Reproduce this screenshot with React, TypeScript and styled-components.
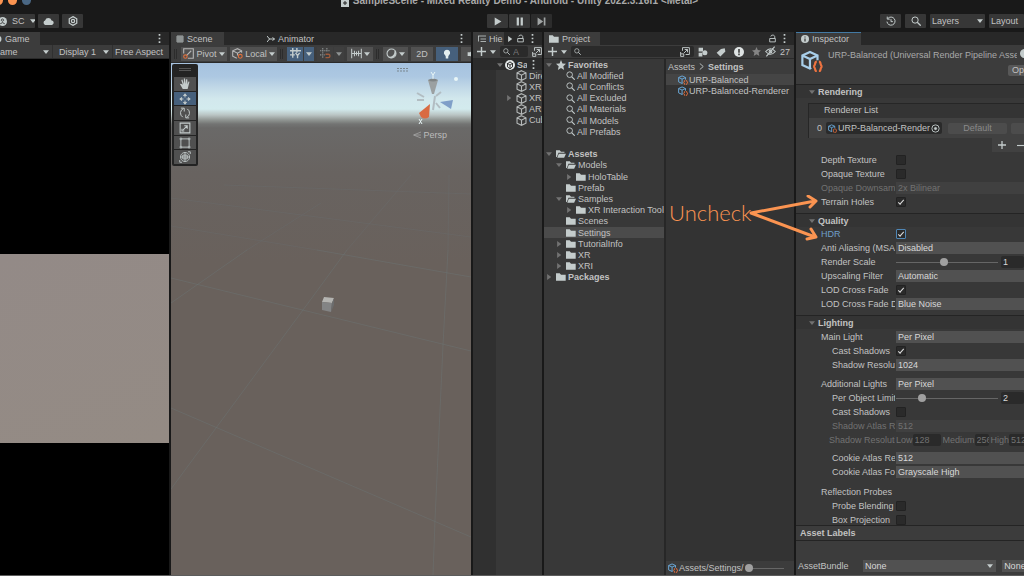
import React from "react";
import styled, { createGlobalStyle, css } from "styled-components";

const c = {
  chrome: "#191919",
  strip: "#282828",
  panel: "#383838",
  bar: "#3c3c3c",
  dark: "#333333",
  field: "#2a2a2a",
  button: "#515151",
  text: "#c2c2c2",
  bright: "#d8d8d8",
  dim: "#727272",
  icon: "#c4cccc",
  blue: "#46607c",
  orange: "#fb9451",
};

const GlobalStyle = createGlobalStyle`
  *, *::before, *::after { box-sizing: border-box; }
  body { margin: 0; background: ${c.chrome}; }
  body, button, input, select { font: 9px/12px "Liberation Sans", Arial, sans-serif; color: ${c.text}; }
  h1, h2, ul { margin: 0; padding: 0; font-size: 9px; list-style: none; }
  button, input, select { margin: 0; border: 0; padding: 0; background: none; border-radius: 0; }
  svg { display: block; flex: none; }
`;

/* ---------- icons ---------- */

const Svg = styled.svg.attrs({ viewBox: "0 0 16 16", "aria-hidden": true })<{ $s?: number; $c?: string }>`
  width: ${(p) => p.$s ?? 10}px;
  height: ${(p) => p.$s ?? 10}px;
  color: ${(p) => p.$c ?? c.icon};
  fill: none;
  stroke: currentColor;
  stroke-width: 1.6;
`;

type IconProps = { s?: number; color?: string };
const solid = { fill: "currentColor", stroke: "none" };

const Caret = ({ s = 6, color }: IconProps) => (
  <Svg $s={s} $c={color}><path d="M0 3h16L8 13z" {...solid} /></Svg>
);
const CaretRight = ({ s = 6, color }: IconProps) => (
  <Svg $s={s} $c={color}><path d="M3 0v16l11-8z" {...solid} /></Svg>
);
const Kebab = () => (
  <Svg $s={9}><path d="M6.500 0h3v3h-3zM6.500 6.500h3v3h-3zM6.500 13h3v3h-3z" {...solid} /></Svg>
);
const Lock = () => (
  <Svg $s={9}><path d="M3 8h10v6H3zM5 4.500C5 1 12 1 12 5v3" /></Svg>
);
const Plus = ({ s = 9 }: IconProps) => (
  <Svg $s={s}><path d="M8 0v16M0 8h16" strokeWidth="2.600" /></Svg>
);
const Search = ({ s = 9, color }: IconProps) => (
  <Svg $s={s} $c={color}><circle cx="6.500" cy="6.500" r="5" /><path d="M10 10l5.500 5.500" strokeWidth="2" /></Svg>
);
const CubeIcon = ({ s = 11, color = "#b5b9b9" }: IconProps) => (
  <Svg $s={s} $c={color}><path d="M8 1l6.500 3v8L8 15l-6.500-3V4zM1.500 4L8 7.500 14.500 4M8 7.500V15" /></Svg>
);
const AssetIcon = ({ s = 10 }: IconProps) => (
  <Svg $s={s} $c={s > 12 ? "#a9cfea" : "#6aa5d3"}>
    <path d="M7.500 13L6.500 13.500 1 11V4l5.500-2.500L12 4v3.500M1 4l5.500 2.500L12 4M6.500 6.500v7" />
    <path d="M11.500 8.500c-2 0-.500 3-2.500 3.500 2 .500.500 3.500 2.500 3.500M13 8.500c2 0 .500 3 2.500 3.500-2 .500-.500 3.500-2.500 3.500" stroke="#ee7340" />
  </Svg>
);
const Folder = () => (
  <Svg $s={10}><path d="M0 2h6l2 2.500h7.500V14H0z" {...solid} /></Svg>
);
const FolderOpen = () => (
  <Svg $s={10}><path d="M0 2h6l2 2.500h5.500V6H4L1.500 12.500 0 13zM4.500 7.500H16L13 14H2z" {...solid} /></Svg>
);
const Star = ({ s = 10, color }: IconProps) => (
  <Svg $s={s} $c={color}><path d="M8 0l2.300 5.400 5.700.600-4.300 3.900 1.300 5.900L8 12.800 3 15.800l1.300-5.900L0 6l5.700-.600z" {...solid} /></Svg>
);
const Popout = () => (
  <Svg $s={10}><path d="M4 1h11v11H9M4 1v5M6 10l6-6M7.500 4H12v4.500M1 8v7h5v-4H1" strokeWidth="1.500" /></Svg>
);
const GridIcon = ({ s = 9, color }: IconProps) => (
  <Svg $s={s} $c={color}><path d="M4 0v16M12 0v16M0 4h16M0 12h16M8 0v16M0 8h16" strokeWidth="1.500" /></Svg>
);

/* ---------- frame ---------- */

const Window = styled.div`
  display: flex;
  flex-direction: column;
  height: 100vh;
  overflow: hidden;
  border-bottom: 1px solid #5c5c5c;
`;
const TitleBar = styled.header`
  display: flex;
  align-items: flex-end;
  justify-content: center;
  gap: 4px;
  height: 7px;
  flex: none;
  padding-left: 15px;
  position: relative;
  overflow: hidden;
  h1 { font-size: 10px; line-height: 12px; font-weight: 700; white-space: nowrap; color: #a9a9a9; }
`;
const Lights = styled.div`
  position: absolute;
  left: -6px;
  bottom: 2px;
  display: flex;
  gap: 5px;
`;
const Light = styled.i<{ $c: string }>`
  width: 9px;
  height: 9px;
  border-radius: 50%;
  background: ${(p) => p.$c};
`;
const MainBar = styled.nav`
  display: grid;
  grid-template-columns: 487fr auto 472fr;
  padding: 7px 0 4px;
  flex: none;
`;
const BarGroup = styled.div<{ $end?: boolean; $gap?: number }>`
  display: flex;
  gap: ${(p) => p.$gap ?? 3}px;
  justify-content: ${(p) => (p.$end ? "flex-end" : "flex-start")};
  min-width: 0;
`;
const BarButton = styled.button<{ $w?: number; $cut?: boolean; $dim?: boolean }>`
  display: flex;
  align-items: center;
  justify-content: ${(p) => (p.$w && p.$w > 30 ? "space-between" : "center")};
  width: ${(p) => p.$w ?? 21}px;
  height: 14px;
  padding: 0 ${(p) => (p.$w && p.$w > 30 ? 2 : 0)}px;
  background: ${(p) => (p.$dim ? "#2c2c2c" : "#373737")};
  border-radius: 1px;
  overflow: hidden;
  white-space: nowrap;
  ${(p) => p.$cut && css`margin-left: -4px; justify-content: flex-start; gap: 5px;`}
`;

const Workspace = styled.main`
  flex: 1;
  min-height: 0;
  display: grid;
  grid-template-columns: minmax(0, 169fr) minmax(0, 300fr) minmax(0, 69fr) minmax(0, 250fr) minmax(0, 228fr);
  gap: 2px;
`;
const Panel = styled.section`
  display: flex;
  flex-direction: column;
  min-height: 0;
  min-width: 0;
  position: relative;
  background: ${c.panel};
`;
const Tabs = styled.div`
  display: flex;
  align-items: center;
  height: 13px;
  flex: none;
  background: ${c.strip};
  overflow: hidden;
`;
const Tab = styled.button<{ $on?: boolean; $blue?: boolean; $w: number }>`
  display: flex;
  align-items: center;
  gap: 3px;
  width: ${(p) => p.$w}px;
  height: 13px;
  padding-left: 5px;
  white-space: nowrap;
  overflow: hidden;
  flex: none;
  background: ${(p) => (p.$on ? c.bar : "transparent")};
  border-top: 1px solid ${(p) => (p.$blue ? "#4379a3" : "transparent")};
`;
const AnimatorTab = styled(Tab)`
  margin-left: 38px;
`;
const TabTools = styled.div`
  display: flex;
  align-items: center;
  gap: 3px;
  margin-left: auto;
  padding-right: 5px;
`;
const Tools = styled.div<{ $h?: number; $gap?: number }>`
  display: flex;
  align-items: center;
  flex: none;
  height: ${(p) => p.$h ?? 14}px;
  gap: ${(p) => p.$gap ?? 4}px;
  padding: 0 4px;
  background: ${c.bar};
  border-bottom: 1px solid #2a2a2a;
  overflow: hidden;
  white-space: nowrap;
`;

/* ---------- game ---------- */

const GameTab = styled(Tab)`
  margin-left: -6px;
  padding-left: 0;
`;
const GameBar = styled(Tools)`
  padding: 0;
  gap: 0;
`;
const GameSelect = styled.label<{ $w?: number; $off?: boolean }>`
  display: flex;
  align-items: center;
  flex: ${(p) => (p.$w ? `0 0 ${p.$w}px` : 1)};
  margin-left: ${(p) => (p.$off ? -10 : 0)}px;
  padding-right: 3px;
  border-right: 1px solid #303030;
  min-width: 0;
  select { flex: 1; min-width: 0; height: 13px; appearance: none; padding-left: 3px; }
  &:nth-child(2) select { padding-left: 6px; }
  &:last-child { padding-right: 0; border: 0; }
  &:last-child select { padding-left: 2px; }
`;
const GameView = styled.div`
  flex: 1;
  display: flex;
  flex-direction: column;
  background: #000;
  &::before { content: ""; flex: 195; }
  &::after { content: ""; flex: 132; }
`;
const GameImage = styled.div`
  flex: 189;
  background: linear-gradient(160deg, #938a87, #948b84);
`;

/* ---------- scene ---------- */

const SceneBar = styled(Tools)`
  gap: 3px;
  padding: 0 0 0 3px;
`;
const SceneButton = styled.button<{ $w: number; $on?: boolean; $dim?: boolean; $join?: boolean }>`
  display: flex;
  align-items: center;
  justify-content: center;
  gap: 2px;
  flex: none;
  width: ${(p) => p.$w}px;
  height: 14px;
  margin-left: ${(p) => (p.$join ? -2 : 0)}px;
  background: ${(p) => (p.$on ? c.blue : p.$dim ? "#414141" : c.button)};
  opacity: ${(p) => (p.$dim ? 0.6 : 1)};
`;
const Grip = styled.i`
  flex: none;
  width: 3px;
  height: 10px;
  margin-right: 1px;
  border: solid #2c2c2c;
  border-width: 0 1px;
`;
const SceneView = styled.div`
  position: relative;
  flex: 1;
  min-height: 0;
  overflow: hidden;
  background: linear-gradient(#a6c2df 0, #adc8e2 14px, #c2d9e7 25px, #d2e8ed 36px, #d3ebee 46px, #b9c4c3 52px, #909592 57px, #737473 61px, #6a6968 65px, #686360 110px, #69615c 200px);
`;
const Ground = styled.svg`
  position: absolute;
  inset: 0;
  width: 100%;
  height: 100%;
`;
const ToolStack = styled.div`
  position: absolute;
  top: 1px;
  left: 1px;
  width: 26px;
  height: 102px;
  padding: 4px 2px 2px;
  display: flex;
  flex-direction: column;
  gap: 1px;
  background: #232323;
  border-radius: 2px;
`;
const ToolHandle = styled.i`
  width: 12px;
  height: 3px;
  margin: 0 auto 5px;
  border: solid #555;
  border-width: 1px 0;
`;
const ToolButton = styled.button<{ $on?: boolean }>`
  flex: 1;
  min-height: 0;
  display: grid;
  place-items: center;
  background: ${(p) => (p.$on ? c.blue : "#505050")};
`;
const Gizmo = styled.div`
  position: absolute;
  top: 2px;
  right: 9px;
  width: 62px;
  height: 78px;
  svg { overflow: visible; }
`;
const Persp = styled.span`
  position: absolute;
  right: 24px;
  top: 66px;
  display: flex;
  gap: 2px;
  align-items: center;
  color: #bcbcbc;
`;

/* ---------- trees ---------- */

const SearchBox = styled.label<{ $w?: number }>`
  display: flex;
  align-items: center;
  gap: 3px;
  height: 11px;
  padding: 0 4px 0 3px;
  flex: ${(p) => (p.$w ? `0 0 ${p.$w}px` : 1)};
  min-width: 0;
  background: ${c.field};
  border-radius: 2px;
  input { min-width: 0; width: 100%; outline: 0; &::placeholder { color: #777; } }
`;
const Tree = styled.ul<{ $rows: number; $h: number }>`
  display: grid;
  grid-template-rows: repeat(${(p) => p.$rows}, 1fr);
  height: ${(p) => p.$h}px;
`;
const TreeRow = styled.li<{ $depth: number; $bold?: boolean; $on?: boolean; $dark?: boolean }>`
  display: flex;
  align-items: center;
  gap: 2px;
  min-height: 0;
  padding-left: ${(p) => 2 + p.$depth * 10}px;
  white-space: nowrap;
  overflow: hidden;
  font-weight: ${(p) => (p.$bold ? 700 : 400)};
  background: ${(p) => (p.$on ? "#4b4b4b" : p.$dark ? "#2b2b2b" : "transparent")};
`;
const Twist = styled.i`
  flex: none;
  width: 8px;
`;
const HierarchyRow = styled(TreeRow)`
  padding-left: 33px;
  padding-right: 1px;
`;
const SceneRow = styled(TreeRow)`
  padding: 0 4px 0 24px;
  gap: 2px;
  span { flex: 1; overflow: hidden; }
`;
const Hierarchy = styled.div`
  flex: 1;
  background: linear-gradient(90deg, #303030 23px, ${c.panel} 23px);
`;
const ProjectBody = styled.div`
  flex: 1;
  min-height: 0;
  display: grid;
  grid-template-columns: minmax(0, 120fr) minmax(0, 128fr);
  gap: 2px;
  background: #272727;
`;
const ProjectTree = styled.div`
  background: ${c.panel};
`;
const ProjectFiles = styled.div`
  display: flex;
  flex-direction: column;
  background: ${c.dark};
`;
const Crumbs = styled.div`
  display: flex;
  align-items: center;
  gap: 3px;
  height: 15px;
  padding-left: 2px;
  background: ${c.bar};
  b { font-weight: 700; }
`;
const FileRow = styled.button<{ $on?: boolean }>`
  display: flex;
  align-items: center;
  gap: 1px;
  height: 11px;
  padding-left: 12px;
  white-space: nowrap;
  background: ${(p) => (p.$on ? "#454545" : "transparent")};
`;
const FilesFooter = styled.footer`
  display: flex;
  align-items: center;
  gap: 1px;
  height: 14px;
  margin-top: auto;
  padding: 0 10px 0 2px;
  background: ${c.bar};
`;
const ToolIcons = styled.div`
  display: flex;
  align-items: center;
  gap: 8px;
`;

/* ---------- inspector ---------- */

const AssetHead = styled.header`
  display: grid;
  grid-template-columns: 24px minmax(0, 1fr) 4px;
  grid-template-rows: 12px 15px;
  column-gap: 3px;
  height: 39px;
  flex: none;
  padding: 4px 0 0 5px;
  background: ${c.bar};
  overflow: hidden;
  > svg:first-child { grid-row: 1 / 3; margin-top: 1px; }
  h1 { font-weight: 400; line-height: 12px; white-space: nowrap; overflow: hidden; color: #a9a9a9; }
`;
const OpenButton = styled.button`
  grid-column: 2 / 4;
  justify-self: end;
  width: 36px;
  height: 11px;
  margin: 4px -20px 0 0;
  line-height: 11px;
  background: #585858;
  border-radius: 2px;
  text-align: left;
  padding-left: 4px;
`;
const Scroll = styled.div`
  flex: 1;
  min-height: 0;
  overflow: hidden;
`;
const SectionTitle = styled.h2`
  display: flex;
  align-items: center;
  gap: 3px;
  height: 14px;
  padding-left: 13px;
  border-top: 1px solid #242424;
  background: #343434;
  font-weight: 700;
`;
const Section = styled.div<{ $top?: number; $bottom?: number }>`
  padding: ${(p) => p.$top ?? 0}px 0 ${(p) => p.$bottom ?? 4}px;
`;
const PropRow = styled.div<{ $dim?: boolean; $space?: number; $blue?: boolean }>`
  display: flex;
  align-items: center;
  height: 14px;
  margin-top: ${(p) => p.$space ?? 0}px;
  color: ${(p) => (p.$dim ? c.dim : p.$blue ? "#6f9fc9" : c.text)};
  select, input { color: ${(p) => (p.$dim ? c.dim : c.bright)}; }
`;
const PropLabel = styled.label<{ $indent?: number }>`
  flex: 0 0 99px;
  margin-right: 1px;
  padding-left: ${(p) => 25 + (p.$indent ?? 0)}px;
  white-space: nowrap;
  overflow: hidden;
`;
const Popup = styled.select<{ $dim?: boolean }>`
  flex: 1;
  min-width: 0;
  height: 12px;
  appearance: none;
  padding-left: 2px;
  background: ${(p) => (p.$dim ? "#404040" : c.button)};
  opacity: 1;
`;
const Check = styled.input.attrs({ type: "checkbox" })<{ $focus?: boolean }>`
  appearance: none;
  display: grid;
  place-items: center;
  width: 10px;
  height: 10px;
  background: ${c.field};
  border: 1px solid ${(p) => (p.$focus ? "#4f86b5" : "#222")};
  border-radius: 1px;
  &:checked::before {
    content: "";
    width: 6px;
    height: 3px;
    margin-bottom: 2px;
    border: solid #dedede;
    border-width: 0 0 1px 1px;
    transform: rotate(-48deg);
  }
`;
const Range = styled.input.attrs({ type: "range" })`
  appearance: none;
  flex: 1;
  min-width: 0;
  height: 9px;
  background: linear-gradient(#666, #666) center / 100% 1px no-repeat;
  &::-webkit-slider-thumb {
    appearance: none;
    width: 8px;
    height: 8px;
    border-radius: 50%;
    background: #a0a0a0;
  }
`;
const NumberField = styled.input<{ $w: number; $gap?: number }>`
  flex: none;
  width: ${(p) => p.$w}px;
  height: 12px;
  margin-left: ${(p) => p.$gap ?? 0}px;
  padding-left: 2px;
  background: ${c.field};
  border-radius: 2px;
`;
const Inline = styled.label`
  display: flex;
  align-items: center;
  flex: none;
  margin-right: 2px;
`;
const ListBox = styled.div`
  margin: 5px 0 0 12px;
  border: solid #262626;
  border-width: 1px 0 0 1px;
`;
const ListHead = styled.div`
  height: 14px;
  padding-left: 15px;
  line-height: 13px;
  background: #343434;
`;
const ListItem = styled.div`
  display: flex;
  align-items: center;
  height: 20px;
  padding-left: 4px;
  background: #414141;
  overflow: hidden;
  white-space: nowrap;
`;
const ListGrip = styled.i`
  width: 7px;
  height: 3px;
  margin-right: 4px;
  border: solid #5c5c5c;
  border-width: 1px 0;
`;
const ObjectField = styled.button`
  display: flex;
  align-items: center;
  gap: 1px;
  flex: none;
  width: 116px;
  height: 12px;
  margin: 0 6px 0 4px;
  padding: 0 2px;
  background: ${c.field};
  border-radius: 2px;
  span { flex: 1; overflow: hidden; text-align: left; }
`;
const DefaultButton = styled.button<{ $w: number }>`
  flex: none;
  width: ${(p) => p.$w}px;
  height: 11px;
  margin-right: 4px;
  line-height: 11px;
  background: #4c4c4c;
  border-radius: 2px;
  color: #8a8a8a;
`;
const ListFoot = styled.div`
  display: flex;
  align-items: center;
  justify-content: flex-end;
  gap: 10px;
  width: 32px;
  height: 14px;
  margin-left: auto;
  background: #414141;
`;
const FootButton = styled.button`
  display: grid;
  place-items: center;
  width: 8px;
  overflow: hidden;
`;
const LabelsHead = styled.h2`
  height: 16px;
  flex: none;
  padding-left: 4px;
  line-height: 15px;
  font-weight: 700;
  border: solid #242424;
  border-width: 1px 0;
  background: ${c.bar};
`;
const BundleRow = styled.div`
  display: grid;
  grid-template-columns: 65px minmax(0, 140fr) minmax(0, 22fr);
  align-items: end;
  height: 34px;
  flex: none;
  padding: 0 0 3px 2px;
  background: ${c.bar};
`;
const BundleSelect = styled.span`
  display: flex;
  align-items: center;
  height: 12px;
  padding: 0 3px 0 0;
  margin-right: 6px;
  background: ${c.button};
  &:last-child { margin-right: 0; padding: 0; }
  select { appearance: none; flex: 1; min-width: 0; padding-left: 2px; color: ${c.bright}; }
`;
const Annotation = styled.div`
  position: absolute;
  left: -127px;
  top: 163px;
  width: 150px;
  height: 50px;
  pointer-events: none;
  z-index: 2;
  color: ${c.orange};
  span { position: absolute; left: 0; top: 6px; font: 300 22px/24px Lato, sans-serif; }
  svg { position: absolute; left: 80px; top: 0; }
`;

/* ---------- parts ---------- */

const favorites = ["All Modified", "All Conflicts", "All Excluded", "All Materials", "All Models", "All Prefabs"];

type Node = { name: string; depth: number; open?: boolean; leaf?: boolean; on?: boolean; bold?: boolean };
const folders: Node[] = [
  { name: "Assets", depth: 0, open: true, bold: true },
  { name: "Models", depth: 1, open: true },
  { name: "HoloTable", depth: 2 },
  { name: "Prefab", depth: 1, leaf: true },
  { name: "Samples", depth: 1, open: true },
  { name: "XR Interaction Toolkit", depth: 2 },
  { name: "Scenes", depth: 1, leaf: true },
  { name: "Settings", depth: 1, leaf: true, on: true },
  { name: "TutorialInfo", depth: 1 },
  { name: "XR", depth: 1 },
  { name: "XRI", depth: 1 },
  { name: "Packages", depth: 0, bold: true },
];

type PropProps = { label: string; indent?: number; dim?: boolean; space?: number; focus?: boolean };
const idOf = (s: string, k = "") => (s + k).toLowerCase().replace(/[^a-z0-9]+/g, "-");

const CheckProp = ({ label, indent, space, focus, on, k }: PropProps & { on?: boolean; k?: string }) => (
  <PropRow $space={space} $blue={focus}>
    <PropLabel htmlFor={idOf(label, k)} $indent={indent}>{label}</PropLabel>
    <Check id={idOf(label, k)} defaultChecked={on} $focus={focus} />
  </PropRow>
);
const SelectProp = ({ label, indent, dim, space, value }: PropProps & { value: string }) => (
  <PropRow $dim={dim} $space={space}>
    <PropLabel htmlFor={idOf(label)} $indent={indent}>{label}</PropLabel>
    <Popup id={idOf(label)} disabled={dim} $dim={dim}><option>{value}</option></Popup>
  </PropRow>
);
const SliderProp = ({ label, indent, value, at }: PropProps & { value: string; at: number }) => (
  <PropRow>
    <PropLabel htmlFor={idOf(label)} $indent={indent}>{label}</PropLabel>
    <Range id={idOf(label)} defaultValue={at} />
    <NumberField aria-label={`${label} value`} defaultValue={value} $w={23} $gap={3} />
  </PropRow>
);

const sceneTools = [
  { name: "View", shape: <path d="M3.500 8L1 7.500 5 14.500h6.500L14 5l-1.500-.500-1 4L11 1.500H9.500L9 8 8 .500H6.500V8L4.500 2 3 2.500 5 9z" {...solid} /> },
  { name: "Move", shape: <path d="M8 3.500v2.500M8 10v2.500M3.500 8H6M10 8h2.500M8 1l2 2.500H6zM8 15l2-2.500H6zM1 8l2.500-2v4zM15 8l-2.500-2v4z" fill="currentColor" strokeWidth="1.200" /> },
  { name: "Rotate", shape: <path d="M5 13.500A6.500 6.500 0 0 1 6 2M11 2.500A6.500 6.500 0 0 1 10 14M2.500 1.500H7V6M13.500 14.500H9V10" strokeWidth="1.300" /> },
  { name: "Scale", shape: <path d="M1.500 1.500h13v13h-13zM5.500 10.500l5-5M7 5h4v4M4 9v3h3" strokeWidth="1.400" /> },
  { name: "Rect", shape: <path d="M2.500 4v8M13.500 4v8M4 2.500h8M4 13.500h8M1.500 1.500h2v2h-2zM12.500 1.500h2v2h-2zM1.500 12.500h2v2h-2zM12.500 12.500h2v2h-2z" strokeWidth="1.200" /> },
  { name: "Transform", shape: <path d="M8 2a6 6 0 1 0 .1 0zM8 2v12M2 8h12M5 5.500h6v5H5zM12 1h3v3M1 12v3h3" strokeWidth="1.200" /> },
];

const GamePanel = () => (
  <Panel>
    <Tabs>
      <GameTab $on $w={46}>
        <Svg $s={8}><circle cx="8" cy="8" r="7" {...solid} /></Svg>
        <span>Game</span>
      </GameTab>
      <TabTools><Kebab /></TabTools>
    </Tabs>
    <GameBar>
      <GameSelect $w={63} $off><select aria-label="View"><option>Game</option></select><Caret /></GameSelect>
      <GameSelect $w={60}><select aria-label="Display"><option>Display 1</option></select><Caret /></GameSelect>
      <GameSelect><select aria-label="Aspect"><option>Free Aspect</option></select></GameSelect>
    </GameBar>
    <GameView><GameImage /></GameView>
  </Panel>
);

const ScenePanel = () => (
  <Panel>
    <Tabs>
      <Tab $on $w={53}><GridIcon s={8} /><span>Scene</span></Tab>
      <AnimatorTab $w={56}>
        <Svg $s={8}><path d="M0 2l5 6-5 6M4 8h11M11 5l4 3-4 3" strokeWidth="2" /></Svg>
        <span>Animator</span>
      </AnimatorTab>
      <TabTools><Kebab /></TabTools>
    </Tabs>
    <SceneBar $h={18}>
      <Grip />
      <SceneButton $w={46}>
        <Svg $s={11} $c="#b5b5b5"><path d="M6 1h9v14H7M1 8V1h6M5 11l7-7" /><circle cx="3.500" cy="12.500" r="2.500" stroke="#e0703c" /></Svg>
        Pivot<Caret />
      </SceneButton>
      <SceneButton $w={47}>
        <Svg $s={11} $c="#b5b5b5"><path d="M7 15l-6-3V4l7-3 6 3v3M1 4l7 3.500L14 4M8 7.500V11" /><circle cx="12" cy="12" r="2.800" stroke="#e0703c" /></Svg>
        Local<Caret />
      </SceneButton>
      <Grip />
      <SceneButton $w={16} $on aria-label="Grid"><Svg $s={11}><path d="M4 0v14M0 4h16M0 10h7M10 0v7M8 7l3 4 3-4M11 11v4" strokeWidth="2" /></Svg></SceneButton>
      <SceneButton $w={10} $on $join aria-label="Grid options"><Caret /></SceneButton>
      <SceneButton $w={16} $dim aria-label="Snap"><Svg $s={11}><path d="M4 0v14M0 4h14M0 10h7M10 0v6" strokeDasharray="2 1" /><path d="M8 9h4a2.500 2.500 0 0 1 0 5H8" stroke="#e0703c" strokeWidth="2" /></Svg></SceneButton>
      <SceneButton $w={10} $dim $join aria-label="Snap options"><Caret /></SceneButton>
      <SceneButton $w={26} aria-label="Increment"><Svg $s={11}><path d="M1 1v14M15 1v14M5 4v8M11 4v8M8 5v6M1 8h14" strokeWidth="1.500" /></Svg><Caret /></SceneButton>
      <Grip />
      <SceneButton $w={25} aria-label="Shading"><Svg $s={11}><circle cx="8" cy="8" r="6.500" /><path d="M13 4a7 7 0 0 1-9 9.500 8 8 0 0 0 9-9.500z" fill="currentColor" /></Svg><Caret /></SceneButton>
      <SceneButton $w={22}>2D</SceneButton>
      <SceneButton $w={22} $on aria-label="Lighting"><Svg $s={10} $c="#e2eef0"><path d="M8 1a5 5 0 0 1 3 9l-1 2v3H6v-3l-1-2a5 5 0 0 1 3-9z" {...solid} /></Svg></SceneButton>
      <SceneButton $w={22} aria-label="Audio"><Svg $s={10}><path d="M1 5h4l5-4v14l-5-4H1z" {...solid} /></Svg></SceneButton>
    </SceneBar>
    <SceneView>
      <Ground viewBox="0 0 300 512" preserveAspectRatio="none" fill="none" stroke="#6c7576" strokeWidth="1">
        <path d="M0 215L300 288M0 345L300 474M0 426L132 247L176 187M0 240L76 187M277 187L272 282L264 457L262 512M146 187L300 214" strokeOpacity=".45" />
        <path d="M176 187L240 112M76 187L150 140M278 112L277 187M0 163L146 187M0 135L300 174M53 122L300 131" strokeOpacity=".25" />
      </Ground>
      <Ground viewBox="0 0 300 512" stroke="none">
        <path d="M153 234L163 235L161 240L151 239z" fill="#b4b4b1" />
        <path d="M151 239L161 240L160 249L151 247z" fill="#838485" />
        <path d="M163 235V242L160 249L161 240z" fill="#6b6c6d" />
      </Ground>
      <ToolStack>
        <ToolHandle />
        {sceneTools.map(({ name, shape }) => (
          <ToolButton key={name} $on={name === "Move"} aria-label={name}><Svg $s={12}>{shape}</Svg></ToolButton>
        ))}
      </ToolStack>
      <Gizmo>
        <svg width="62" height="60" viewBox="0 0 62 60" aria-hidden="true">
          <path d="M-3 3.500h11M-3 6h11" stroke="#78858e" strokeDasharray="2 1" />
          <path d="M28 15l5-1 5 1-4 14h-2z" fill="#9ba0a1" />
          <path d="M28 15q5-3 10 0q-5 3-10 0" fill="#7f8485" />
          <path d="M17 28l7 4M17 35h7M41 27l-5 4M40 43l-4-5M35 31l-2 14" stroke="#b2bdc2" strokeWidth="2" />
          <path d="M30 39L19 48l2 4q4 3 8 0z" fill="#d96b43" />
          <path d="M40 37l13-2-2 9z" fill="#7f9fc8" />
          <path d="M31 7l2 3 2-3M33 10v4M19 54l3 5M22 54l-3 5" stroke="#e9f6f7" fill="none" />
          <circle cx="56" cy="14" r="2" fill="#e9f6f7" />
        </svg>
      </Gizmo>
      <Persp><Svg $s={8} $c="#a4a4a4"><path d="M16 2L1 8l15 6M16 8H2" /></Svg>Persp</Persp>
    </SceneView>
  </Panel>
);

const HierarchyPanel = () => (
  <Panel>
    <Tabs>
      <Tab $on $w={31}><Svg $s={8}><path d="M0 2h16M5 8h11M5 13h11M1 2v11" /></Svg><span>Hie</span></Tab>
      <TabTools><CaretRight s={6} /><Lock /><Kebab /></TabTools>
    </Tabs>
    <Tools>
      <Plus /><Caret />
      <SearchBox $w={28}><Search s={7} /><input aria-label="Search hierarchy" placeholder="A" /></SearchBox>
      <Popout />
    </Tools>
    <Hierarchy>
      <Tree $rows={6} $h={67}>
        <SceneRow $depth={0} $bold $dark>
          <Caret color={c.dim} />
          <Svg $s={10} $c="#e4e8e8"><circle cx="8" cy="8" r="8" {...solid} /><path d="M8 8v6M8 8L3 5M8 8l5-3M4 11l4 3 4-3V6L8 3 4 6z" stroke="#333" /></Svg>
          <span>SampleScene</span><Kebab />
        </SceneRow>
        {["Directional Light", "XR Origin", "XR Interaction Setup", "AR Session", "Cube"].map((name, i) => (
          <HierarchyRow key={name} $depth={0}>
            <Twist>{i === 2 && <CaretRight color={c.dim} />}</Twist>
            <CubeIcon />{name}
          </HierarchyRow>
        ))}
      </Tree>
    </Hierarchy>
  </Panel>
);

const ProjectPanel = () => (
  <Panel>
    <Tabs>
      <Tab $on $w={56}><Folder /><span>Project</span></Tab>
      <TabTools><Lock /><Kebab /></TabTools>
    </Tabs>
    <Tools>
      <Plus /><Caret />
      <SearchBox><Search s={7} /><input aria-label="Search assets" /><Popout /></SearchBox>
      <ToolIcons>
        <Svg><path d="M1 1h7v6H1zM1 9h6v6H1z" {...solid} /><circle cx="11" cy="9" r="4" {...solid} /></Svg>
        <Svg><path d="M1 9l7-6 6-1 1 5-8 8z" {...solid} /></Svg>
        <Svg><circle cx="8" cy="8" r="8" fill="#dfe4e4" stroke="none" /><path d="M8 3v6M8 10.500v2.500" stroke="#333" strokeWidth="2.400" /></Svg>
        <Star s={9} color="#858585" />
      </ToolIcons>
      <Svg $s={11}><path d="M1 8q7-8 14 0-7 8-14 0zM2 15L14 1" /><circle cx="8" cy="8" r="2" /></Svg>27
    </Tools>
    <ProjectBody>
      <ProjectTree>
        <Tree $rows={20} $h={224}>
          <TreeRow $depth={0} $bold><Twist><Caret color={c.dim} /></Twist><Star />Favorites</TreeRow>
          {favorites.map((name) => (
            <TreeRow key={name} $depth={1}><Twist /><Search s={9} />{name}</TreeRow>
          ))}
          <li />
          {folders.map((f) => (
            <TreeRow key={f.name} $depth={f.depth} $bold={f.bold} $on={f.on}>
              <Twist>{f.open ? <Caret color={c.dim} /> : !f.leaf && <CaretRight color={c.dim} />}</Twist>
              {f.open ? <FolderOpen /> : <Folder />}{f.name}
            </TreeRow>
          ))}
        </Tree>
      </ProjectTree>
      <ProjectFiles>
        <Crumbs>Assets<Svg $s={7}><path d="M4 1l8 7-8 7" strokeWidth="2" /></Svg><b>Settings</b></Crumbs>
        <FileRow $on><AssetIcon />URP-Balanced</FileRow>
        <FileRow><AssetIcon />URP-Balanced-Renderer</FileRow>
        <FilesFooter><AssetIcon />Assets/Settings/<Range aria-label="Icon size" defaultValue={0} /></FilesFooter>
      </ProjectFiles>
    </ProjectBody>
  </Panel>
);

const Inspector = () => (
  <Panel>
    <Tabs>
      <Tab $on $blue $w={65}>
        <Svg $s={8}><circle cx="8" cy="8" r="8" {...solid} /><path d="M8 3v2M8 7v6" stroke="#333" strokeWidth="2.400" /></Svg>
        <span>Inspector</span>
      </Tab>
    </Tabs>
    <AssetHead>
      <AssetIcon s={22} />
      <h1>URP-Balanced (Universal Render Pipeline Asset)</h1>
      <Svg $s={9}><circle cx="8" cy="8" r="8" {...solid} /></Svg>
      <OpenButton>Open</OpenButton>
    </AssetHead>
    <Scroll>
      <SectionTitle><Caret color={c.dim} />Rendering</SectionTitle>
      <Section>
        <ListBox>
          <ListHead>Renderer List</ListHead>
          <ListItem>
            <ListGrip />0
            <ObjectField>
              <AssetIcon s={9} /><span>URP-Balanced-Renderer</span>
              <Svg $s={9}><circle cx="8" cy="8" r="6.500" /><circle cx="8" cy="8" r="2" fill="currentColor" /></Svg>
            </ObjectField>
            <DefaultButton $w={59}>Default</DefaultButton>
            <DefaultButton $w={20} aria-label="Renderer options" />
          </ListItem>
        </ListBox>
        <ListFoot>
          <FootButton aria-label="Add"><Plus s={8} /></FootButton>
          <FootButton aria-label="Remove"><Svg $s={7}><path d="M0 8h16" strokeWidth="2.600" /></Svg></FootButton>
        </ListFoot>
        <Section $top={1} $bottom={0}>
          <CheckProp label="Depth Texture" />
          <CheckProp label="Opaque Texture" />
          <SelectProp label="Opaque Downsampling" value="2x Bilinear" dim />
          <CheckProp label="Terrain Holes" on />
        </Section>
      </Section>
      <SectionTitle><Caret color={c.dim} />Quality</SectionTitle>
      <Section>
        <CheckProp label="HDR" on focus />
        <SelectProp label="Anti Aliasing (MSAA)" value="Disabled" />
        <SliderProp label="Render Scale" value="1" at={47} />
        <SelectProp label="Upscaling Filter" value="Automatic" />
        <CheckProp label="LOD Cross Fade" on />
        <SelectProp label="LOD Cross Fade Dithering" value="Blue Noise" />
      </Section>
      <SectionTitle><Caret color={c.dim} />Lighting</SectionTitle>
      <Section $top={1}>
        <SelectProp label="Main Light" value="Per Pixel" />
        <CheckProp label="Cast Shadows" indent={11} on k="main" />
        <SelectProp label="Shadow Resolution" indent={11} value="1024" />
        <SelectProp label="Additional Lights" value="Per Pixel" space={5} />
        <SliderProp label="Per Object Limit" indent={11} value="2" at={23} />
        <CheckProp label="Cast Shadows" indent={11} k="extra" />
        <SelectProp label="Shadow Atlas Resolution" indent={11} value="512" dim />
        <PropRow $dim>
          <PropLabel as="span" $indent={8}>Shadow Resolution Tiers</PropLabel>
          <Inline>Low<NumberField disabled defaultValue="128" $w={28} /></Inline>
          <Inline>Medium<NumberField disabled defaultValue="256" $w={14} /></Inline>
          <Inline>High<NumberField disabled defaultValue="512" $w={28} /></Inline>
        </PropRow>
        <SelectProp label="Cookie Atlas Resolution" indent={11} value="512" space={4} />
        <SelectProp label="Cookie Atlas Format" indent={11} value="Grayscale High" />
        <PropRow $space={6}><PropLabel as="span">Reflection Probes</PropLabel></PropRow>
        <CheckProp label="Probe Blending" indent={11} />
        <CheckProp label="Box Projection" indent={11} />
      </Section>
    </Scroll>
    <LabelsHead>Asset Labels</LabelsHead>
    <BundleRow>
      <label htmlFor="bundle">AssetBundle</label>
      <BundleSelect><select id="bundle"><option>None</option></select><Caret /></BundleSelect>
      <BundleSelect><select aria-label="Bundle variant"><option>None</option></select></BundleSelect>
    </BundleRow>
    <Annotation>
      <span>Uncheck</span>
      <svg width="72" height="50" viewBox="0 0 72 50" fill="none" stroke="currentColor" strokeWidth="3" strokeLinecap="round" strokeLinejoin="round" aria-hidden="true">
        <path d="M66 6L2 18L66 42M59 1l8 5-6 6M62 34l5 8-9 2" />
      </svg>
    </Annotation>
  </Panel>
);

export default function App() {
  return (
    <>
      <GlobalStyle />
      <Window>
        <TitleBar>
          <Lights><Light $c="#fb9451" /><Light $c="#fb9451" /><Light $c="#4a6784" /></Lights>
          <Svg $s={8}><path d="M0 0h16v16H0z" {...solid} /><path d="M8 4v8M4 8h8" stroke="#222" strokeWidth="2" /></Svg>
          <h1>SampleScene - Mixed Reality Demo - Android - Unity 2022.3.16f1 &lt;Metal&gt;</h1>
        </TitleBar>
        <MainBar>
          <BarGroup>
            <BarButton $w={39} $cut>
              <Svg $s={9}><circle cx="8" cy="8" r="8" {...solid} /><path d="M8 3.500a2 2 0 1 1-.1 0M4 12q4-4 8 0" stroke="#333" /></Svg>
              SC<Caret />
            </BarButton>
            <BarButton aria-label="Cloud"><Svg $s={11}><path d="M3 13a3.500 3.500 0 0 1 0-6.500 5 5 0 0 1 9.500 0A3.300 3.300 0 0 1 13 13z" {...solid} /></Svg></BarButton>
            <BarButton aria-label="Settings"><Svg $s={10}><path d="M8 1l6 3.500v7L8 15l-6-3.500v-7z" strokeWidth="2" /><circle cx="8" cy="8" r="2.600" strokeWidth="2" /></Svg></BarButton>
          </BarGroup>
          <BarGroup $gap={1}>
            <BarButton aria-label="Play"><Svg $s={9}><path d="M3 1v14l12-7z" {...solid} /></Svg></BarButton>
            <BarButton aria-label="Pause"><Svg $s={9}><path d="M3 1h4v14H3zM10 1h4v14h-4z" {...solid} /></Svg></BarButton>
            <BarButton aria-label="Step" $dim><Svg $s={9} $c="#a0a4a4"><path d="M1 1v14l10-7zM12 1h3v14h-3z" {...solid} /></Svg></BarButton>
          </BarGroup>
          <BarGroup $end $gap={4}>
            <BarButton aria-label="History"><Svg $s={10}><path d="M3 4a6.500 6.500 0 1 1-1.500 5M2 1v4h4M8 5v4h3" /></Svg></BarButton>
            <BarButton aria-label="Search"><Search s={10} /></BarButton>
            <BarButton $w={55}>Layers<Caret /></BarButton>
            <BarButton $w={35}>Layout</BarButton>
          </BarGroup>
        </MainBar>
        <Workspace>
          <GamePanel />
          <ScenePanel />
          <HierarchyPanel />
          <ProjectPanel />
          <Inspector />
        </Workspace>
      </Window>
    </>
  );
}
